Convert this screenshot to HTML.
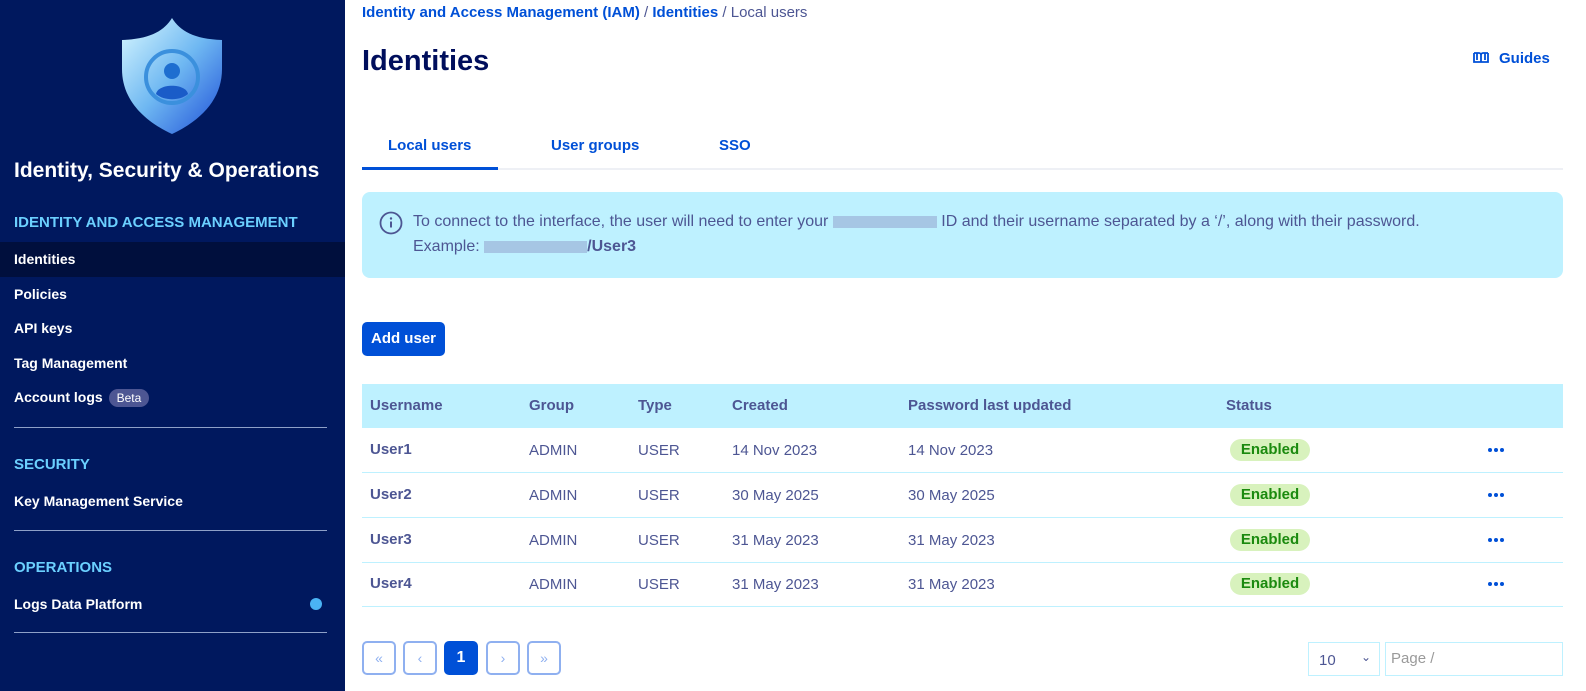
<!DOCTYPE html>
<html><head><meta charset="utf-8"><style>
*{box-sizing:border-box;margin:0;padding:0}
body{width:1586px;height:691px;overflow:hidden;font-family:"Liberation Sans",sans-serif;background:#fff;position:relative;color:#4d5693}
.sb{position:absolute;left:0;top:0;width:345px;height:691px;background:#00185e;color:#fff}
.a{position:absolute;white-space:nowrap}
.sb .it{position:absolute;left:14px;font-size:14px;font-weight:bold;color:#fff}
.sb .h{position:absolute;left:14px;font-size:15px;font-weight:bold;color:#6bd0ff}
.sb .hr{position:absolute;left:14px;width:313px;height:1px;background:#8ea0c8}
.blue{color:#0050d7}
.tb{position:absolute;left:362px;width:1201px}
.row{position:absolute;left:362px;width:1201px;height:45px;border-bottom:1px solid #bef1ff;font-size:15px}
.row span{position:absolute;top:14px}
.badge{position:absolute;top:11px;width:80px;height:22px;border-radius:11px;background:#d8f2bd;color:#1b8a0f;font-weight:bold;font-size:15px;text-align:center;line-height:22px}
.dots{position:absolute;top:20px;display:flex;gap:2px}
.dots i{display:block;width:4px;height:4px;border-radius:2px;background:#0050d7}
.pg{position:absolute;top:641px;width:34px;height:34px;border:2px solid #8fb0f0;border-radius:5px;color:#8fb0f0;text-align:center;line-height:30px;font-size:14px}
</style></head><body>
<div class="sb">
<svg class="a" style="left:120px;top:17px" width="104" height="118" viewBox="0 0 104 118">
<defs><linearGradient id="g" x1="0" y1="0" x2="1" y2="1"><stop offset="0" stop-color="#d9f8ff"/><stop offset=".5" stop-color="#6fb8f2"/><stop offset="1" stop-color="#1e4fd8"/></linearGradient></defs>
<path d="M52 1 C44 14 30 22 2 23 L2 52 C2 80 20 102 52 117 C84 102 102 80 102 52 L102 23 C74 22 60 14 52 1Z" fill="url(#g)"/>
<circle cx="52" cy="60" r="26" fill="none" stroke="#3b90dd" stroke-width="4"/>
<circle cx="52" cy="54" r="8" fill="#1e6ed0"/>
<path d="M36 77 C38 66 66 66 68 77 C60 84 44 84 36 77Z" fill="#1a5cc8"/>
</svg>
<div class="a" style="left:14px;top:159px;font-size:21px;font-weight:bold">Identity, Security &amp; Operations</div>
<div class="h" style="top:214px">IDENTITY AND ACCESS MANAGEMENT</div>
<div class="a" style="left:0;top:242px;width:345px;height:35px;background:#000f3d"></div>
<div class="it" style="top:251px">Identities</div>
<div class="it" style="top:286px">Policies</div>
<div class="it" style="top:320px">API keys</div>
<div class="it" style="top:355px">Tag Management</div>
<div class="it" style="top:389px">Account logs <span style="display:inline-block;background:#4d5693;border-radius:10px;padding:2px 8px;font-size:12px;font-weight:normal;margin-left:2px">Beta</span></div>
<div class="hr" style="top:427px"></div>
<div class="h" style="top:456px">SECURITY</div>
<div class="it" style="top:493px">Key Management Service</div>
<div class="hr" style="top:530px"></div>
<div class="h" style="top:559px">OPERATIONS</div>
<div class="it" style="top:596px">Logs Data Platform</div>
<div class="a" style="left:310px;top:598px;width:12px;height:12px;border-radius:6px;background:#4ab3f4"></div>
<div class="hr" style="top:632px"></div>
</div>

<div class="a" style="left:362px;top:4px;font-size:15px"><span class="blue" style="font-weight:bold">Identity and Access Management (IAM)</span> / <span class="blue" style="font-weight:bold">Identities</span> / Local users</div>
<div class="a" style="left:362px;top:45px;font-size:29px;font-weight:bold;color:#000e5c">Identities</div>
<div class="a blue" style="left:1473px;top:50px;font-size:15px;font-weight:bold"><svg width="16" height="12" viewBox="0 0 16 12" style="margin-right:10px"><path d="M1 2h5a2 2 0 0 1 2 2v7M15 2h-5a2 2 0 0 0-2 2M1 2v9h14V2M4 2v7M12 2v7" fill="none" stroke="#0050d7" stroke-width="1.8"/></svg>Guides</div>

<div class="tb" style="top:168px;height:2px;background:#eef0f5"></div>
<div class="a" style="left:362px;top:167px;width:136px;height:3px;background:#0050d7"></div>
<div class="a blue" style="left:388px;top:137px;font-size:15px;font-weight:bold">Local users</div>
<div class="a blue" style="left:551px;top:137px;font-size:15px;font-weight:bold">User groups</div>
<div class="a blue" style="left:719px;top:137px;font-size:15px;font-weight:bold">SSO</div>

<div class="tb" style="top:192px;height:86px;background:#bef1ff;border-radius:8px;font-size:16px">
<svg class="a" style="left:17px;top:19px" width="24" height="24" viewBox="0 0 24 24"><circle cx="12" cy="12" r="10.5" fill="none" stroke="#4d5693" stroke-width="1.8"/><path d="M12 10.5v6" stroke="#4d5693" stroke-width="2"/><circle cx="12" cy="7.5" r="1.2" fill="#4d5693"/></svg>
<div class="a" style="left:51px;top:21px">To connect to the interface, the user will need to enter your <span style="display:inline-block;width:104px;height:12px;background:#a6c6e4;vertical-align:middle"></span> ID and their username separated by a ‘/’, along with their password.</div>
<div class="a" style="left:51px;top:46px">Example: <span style="display:inline-block;width:103px;height:12px;background:#a6c6e4;vertical-align:middle"></span><b>/User3</b></div>
</div>

<div class="a" style="left:362px;top:322px;width:83px;height:34px;background:#0050d7;border-radius:5px;color:#fff;font-weight:bold;font-size:15px;text-align:center;line-height:34px">Add user</div>

<div class="tb" style="top:384px;height:44px;background:#bef1ff;font-size:15px;font-weight:bold">
<span class="a" style="left:8px;top:13px">Username</span><span class="a" style="left:167px;top:13px">Group</span><span class="a" style="left:276px;top:13px">Type</span><span class="a" style="left:370px;top:13px">Created</span><span class="a" style="left:546px;top:13px">Password last updated</span><span class="a" style="left:864px;top:13px">Status</span>
</div>

<div class="row" style="top:428px"><span style="left:8px;top:13px;font-weight:bold">User1</span><span style="left:167px">ADMIN</span><span style="left:276px">USER</span><span style="left:370px">14 Nov 2023</span><span style="left:546px">14 Nov 2023</span><div class="badge" style="left:868px">Enabled</div><div class="dots" style="left:1126px"><i></i><i></i><i></i></div></div>
<div class="row" style="top:473px"><span style="left:8px;top:13px;font-weight:bold">User2</span><span style="left:167px">ADMIN</span><span style="left:276px">USER</span><span style="left:370px">30 May 2025</span><span style="left:546px">30 May 2025</span><div class="badge" style="left:868px">Enabled</div><div class="dots" style="left:1126px"><i></i><i></i><i></i></div></div>
<div class="row" style="top:518px"><span style="left:8px;top:13px;font-weight:bold">User3</span><span style="left:167px">ADMIN</span><span style="left:276px">USER</span><span style="left:370px">31 May 2023</span><span style="left:546px">31 May 2023</span><div class="badge" style="left:868px">Enabled</div><div class="dots" style="left:1126px"><i></i><i></i><i></i></div></div>
<div class="row" style="top:562px"><span style="left:8px;top:13px;font-weight:bold">User4</span><span style="left:167px">ADMIN</span><span style="left:276px">USER</span><span style="left:370px">31 May 2023</span><span style="left:546px">31 May 2023</span><div class="badge" style="left:868px">Enabled</div><div class="dots" style="left:1126px"><i></i><i></i><i></i></div></div>

<div class="pg" style="left:362px">«</div>
<div class="pg" style="left:403px">‹</div>
<div class="pg" style="left:444px;background:#0050d7;border-color:#0050d7;color:#fff;font-weight:bold;font-size:16px">1</div>
<div class="pg" style="left:486px">›</div>
<div class="pg" style="left:527px">»</div>

<div class="a" style="left:1308px;top:642px;width:72px;height:34px;border:1px solid #bef1ff;font-size:15px;padding:9px 10px">10<span style="position:absolute;right:8px;top:7px;font-size:12px">⌄</span></div>
<div class="a" style="left:1385px;top:642px;width:178px;height:34px;border:1px solid #bef1ff;font-size:15px;padding:7px 5px;color:#9a9a9a">Page /</div>
</body></html>
